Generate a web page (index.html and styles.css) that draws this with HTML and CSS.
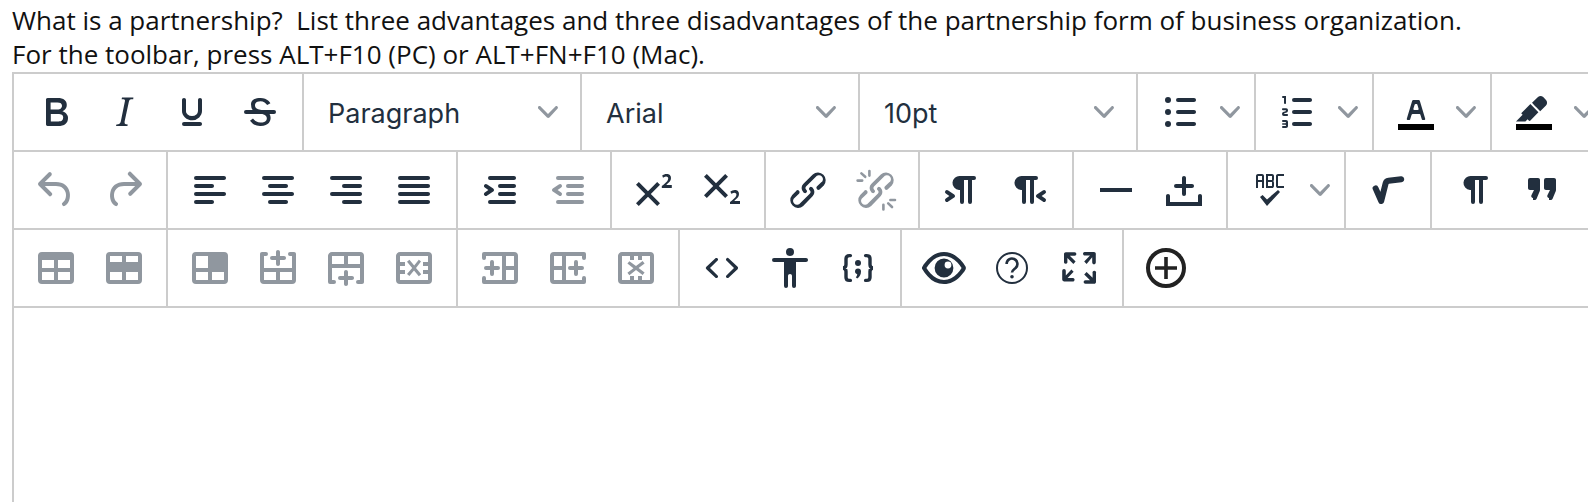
FILE: index.html
```html
<!DOCTYPE html>
<html lang="en">
<head>
<meta charset="utf-8">
<title>Essay question editor</title>
<link rel="stylesheet" href="styles.css">
</head>
<body>
<svg class="defs" width="0" height="0" aria-hidden="true">
<defs>
<symbol id="chev" viewBox="0 0 10 10"><path d="M8.7 2.2c.3-.3.8-.3 1 0 .4.4.4.9 0 1.2L5.7 7.8c-.3.3-.9.3-1.2 0L.2 3.4a.8.8 0 0 1 0-1.2c.3-.3.8-.3 1.1 0L5 6l3.7-3.8z"/></symbol>
<symbol id="bold" viewBox="0 0 24 24"><path fill-rule="evenodd" d="M7.8 19c-.3 0-.5 0-.6-.2l-.2-.5V5.7c0-.2 0-.4.2-.5l.6-.2h5c1.5 0 2.7.3 3.5 1 .7.6 1.1 1.4 1.1 2.5a3 3 0 0 1-.6 1.9c-.4.6-1 1-1.6 1.2.4.1.9.3 1.3.6s.8.7 1 1.2c.4.4.5 1 .5 1.6 0 1.3-.4 2.3-1.3 3-.8.7-2.1 1-3.8 1H7.8zm5-8.3c.6 0 1.2-.1 1.6-.5.4-.3.6-.7.6-1.3 0-1.1-.8-1.7-2.3-1.7H9.3v3.5h3.4zm.5 6c.7 0 1.3-.1 1.7-.4.4-.4.6-.9.6-1.5s-.2-1-.7-1.4c-.4-.3-1-.4-2-.4H9.4v3.8h4z"/></symbol>
<symbol id="italic" viewBox="0 0 24 24"><path d="M16.7 4.7l-.1.9h-.3c-.6 0-1 0-1.4.3-.3.3-.4.6-.5 1.1l-2.1 9.8v.6c0 .5.4.8 1.4.8h.2l-.2.8H8l.2-.8h.2c1.1 0 1.8-.5 2-1.5l2-9.8.1-.5c0-.6-.4-.8-1.4-.8h-.3l.2-.9h5.8z"/></symbol>
<symbol id="underline" viewBox="0 0 24 24"><path d="M16 5c.6 0 1 .4 1 1v5.5a4 4 0 0 1-.4 1.8l-1 1.4a5.3 5.3 0 0 1-5.5 1 5 5 0 0 1-1.6-1c-.5-.4-.8-.9-1.1-1.4a4 4 0 0 1-.4-1.8V6c0-.6.4-1 1-1s1 .4 1 1v5.5c0 .3 0 .6.2 1l.6.7a3.3 3.3 0 0 0 2.2.8 3.4 3.4 0 0 0 2.2-.8c.3-.2.4-.5.6-.8l.2-.9V6c0-.6.4-1 1-1zM8 17h8c.6 0 1 .4 1 1s-.4 1-1 1H8a1 1 0 0 1 0-2z"/></symbol>
<symbol id="strike" viewBox="0 0 24 24"><path d="M15.6 8.5c-.5-.7-1-1.1-1.3-1.3-.6-.4-1.3-.6-2-.6-2.7 0-2.8 1.7-2.8 2.1 0 1.6 1.8 2 3.2 2.3 4.4.9 4.6 2.8 4.6 3.9 0 1.4-.7 4.1-5 4.1A6.2 6.2 0 0 1 7 16.4l1.5-1.1c.4.6 1.6 2 3.7 2 1.6 0 2.5-.4 3-1.2.4-.8.3-2-.8-2.6-.7-.4-1.6-.7-2.9-1-1-.2-3.9-.8-3.9-3.6C7 6 9.3 5 12.3 5c1.7 0 3 .6 3.9 1.4.4.4.8.9 1 1.2l-1.6.9z"/><path d="M5 11h14a1 1 0 0 1 0 2H5a1 1 0 0 1 0-2z"/></symbol>
<symbol id="bull" viewBox="0 0 24 24"><path d="M11 5h8c.6 0 1 .4 1 1s-.4 1-1 1h-8a1 1 0 0 1 0-2zm0 6h8c.6 0 1 .4 1 1s-.4 1-1 1h-8a1 1 0 0 1 0-2zm0 6h8c.6 0 1 .4 1 1s-.4 1-1 1h-8a1 1 0 0 1 0-2z"/><circle cx="6" cy="6" r="1.5"/><circle cx="6" cy="12" r="1.5"/><circle cx="6" cy="18" r="1.5"/></symbol>
<symbol id="num" viewBox="0 0 24 24"><path d="M10 17h8c.6 0 1 .4 1 1s-.4 1-1 1h-8a1 1 0 0 1 0-2zm0-6h8c.6 0 1 .4 1 1s-.4 1-1 1h-8a1 1 0 0 1 0-2zm0-6h8c.6 0 1 .4 1 1s-.4 1-1 1h-8a1 1 0 1 1 0-2zM6 4v3.5c0 .3-.2.5-.5.5a.5.5 0 0 1-.5-.5V5h-.5a.5.5 0 0 1 0-1H6zm-1 8.8l.2.2h1.3c.3 0 .5.2.5.5s-.2.5-.5.5H4.9a1 1 0 0 1-.9-1V13c0-.4.3-.8.6-1l1.2-.4.2-.3a.2.2 0 0 0-.2-.2H4.5a.5.5 0 0 1-.5-.5c0-.3.2-.5.5-.5h1.6c.5 0 .9.4.9 1v.1c0 .4-.3.8-.6 1l-1.2.4-.2.3zM7 17v2c0 .6-.4 1-1 1H4.5a.5.5 0 0 1 0-1h1.2c.2 0 .3-.1.3-.3 0-.2-.1-.3-.3-.3H4.4a.4.4 0 1 1 0-.8h1.3c.2 0 .3-.1.3-.3 0-.2-.1-.3-.3-.3H4.5a.5.5 0 1 1 0-1H6c.6 0 1 .4 1 1v.5z"/></symbol>
<symbol id="forecolor" viewBox="0 0 24 24"><path class="swatch" d="M3 18h18v3H3z"/><path fill-rule="evenodd" d="M8.7 16h-.8a.5.5 0 0 1-.5-.6l2.7-9c.1-.3.3-.4.5-.4h2.8c.2 0 .4.1.5.4l2.7 9a.5.5 0 0 1-.5.6h-.8a.5.5 0 0 1-.4-.4l-.7-2.2c0-.3-.3-.4-.5-.4h-3.4c-.2 0-.4.1-.5.4l-.7 2.2c0 .3-.2.4-.4.4zm2.6-7.6l-.6 2a.5.5 0 0 0 .5.6h1.6a.5.5 0 0 0 .5-.6l-.6-2c0-.3-.3-.4-.5-.4h-.4c-.2 0-.4.1-.5.4z"/></symbol>
<symbol id="highlight" viewBox="0 0 24 24"><path class="swatch" d="M3 18h18v3H3z"/><path d="M7.7 16.7H3l3.3-3.3-.7-.8L10.2 8l4 4.1-4 4.2c-.2.2-.6.2-.8 0l-.6-.7-1.1 1.1zm5-7.5L11 7.4l3-2.9a2 2 0 0 1 2.6 0L18 6c.7.7.7 2 0 2.7l-2.9 2.9-1.8-1.8-.5-.6"/></symbol>
<symbol id="undo" viewBox="0 0 24 24"><path d="M6.4 8H12c3.7 0 6.2 2 6.8 5.1.6 2.7-.4 5.6-2.3 6.8a1 1 0 0 1-1-1.8c1.1-.7 1.8-2.7 1.4-4.6-.5-2.1-2.1-3.5-4.9-3.5H6.4l3.3 3.3a1 1 0 1 1-1.4 1.4l-5-5a1 1 0 0 1 0-1.4l5-5a1 1 0 0 1 1.4 1.4L6.4 8z"/></symbol>
<symbol id="redo" viewBox="0 0 24 24"><path d="M17.6 10H12c-2.8 0-4.4 1.4-4.9 3.5-.4 2 .3 3.9 1.4 4.6a1 1 0 1 1-1 1.8c-2-1.2-2.9-4.1-2.3-6.8.6-3 3-5.1 6.8-5.1h5.6l-3.3-3.3a1 1 0 1 1 1.4-1.4l5 5a1 1 0 0 1 0 1.4l-5 5a1 1 0 0 1-1.4-1.4l3.3-3.3z"/></symbol>
<symbol id="al" viewBox="0 0 24 24"><path d="M5 5h14c.6 0 1 .4 1 1s-.4 1-1 1H5a1 1 0 1 1 0-2zm0 4h8c.6 0 1 .4 1 1s-.4 1-1 1H5a1 1 0 1 1 0-2zm0 8h8c.6 0 1 .4 1 1s-.4 1-1 1H5a1 1 0 0 1 0-2zm0-4h14c.6 0 1 .4 1 1s-.4 1-1 1H5a1 1 0 0 1 0-2z"/></symbol>
<symbol id="ac" viewBox="0 0 24 24"><path d="M5 5h14c.6 0 1 .4 1 1s-.4 1-1 1H5a1 1 0 1 1 0-2zm3 4h8c.6 0 1 .4 1 1s-.4 1-1 1H8a1 1 0 1 1 0-2zm0 8h8c.6 0 1 .4 1 1s-.4 1-1 1H8a1 1 0 0 1 0-2zm-3-4h14c.6 0 1 .4 1 1s-.4 1-1 1H5a1 1 0 0 1 0-2z"/></symbol>
<symbol id="ar" viewBox="0 0 24 24"><path d="M5 5h14c.6 0 1 .4 1 1s-.4 1-1 1H5a1 1 0 1 1 0-2zm6 4h8c.6 0 1 .4 1 1s-.4 1-1 1h-8a1 1 0 0 1 0-2zm0 8h8c.6 0 1 .4 1 1s-.4 1-1 1h-8a1 1 0 0 1 0-2zm-6-4h14c.6 0 1 .4 1 1s-.4 1-1 1H5a1 1 0 0 1 0-2z"/></symbol>
<symbol id="aj" viewBox="0 0 24 24"><path d="M5 5h14c.6 0 1 .4 1 1s-.4 1-1 1H5a1 1 0 1 1 0-2zm0 4h14c.6 0 1 .4 1 1s-.4 1-1 1H5a1 1 0 1 1 0-2zm0 4h14c.6 0 1 .4 1 1s-.4 1-1 1H5a1 1 0 0 1 0-2zm0 4h14c.6 0 1 .4 1 1s-.4 1-1 1H5a1 1 0 0 1 0-2z"/></symbol>
<symbol id="indent" viewBox="0 0 24 24"><path d="M7 5h12c.6 0 1 .4 1 1s-.4 1-1 1H7a1 1 0 1 1 0-2zm5 4h7c.6 0 1 .4 1 1s-.4 1-1 1h-7a1 1 0 0 1 0-2zm0 4h7c.6 0 1 .4 1 1s-.4 1-1 1h-7a1 1 0 0 1 0-2zm-5 4h12a1 1 0 0 1 0 2H7a1 1 0 0 1 0-2zm-2.6-3.8L6.2 12l-1.8-1.2a1 1 0 0 1 1.2-1.6l3 2a1 1 0 0 1 0 1.6l-3 2a1 1 0 1 1-1.2-1.6z"/></symbol>
<symbol id="outdent" viewBox="0 0 24 24"><path d="M7 5h12c.6 0 1 .4 1 1s-.4 1-1 1H7a1 1 0 1 1 0-2zm5 4h7c.6 0 1 .4 1 1s-.4 1-1 1h-7a1 1 0 0 1 0-2zm0 4h7c.6 0 1 .4 1 1s-.4 1-1 1h-7a1 1 0 0 1 0-2zm-5 4h12a1 1 0 0 1 0 2H7a1 1 0 0 1 0-2zm1.6-3.8a1 1 0 0 1-1.2 1.6l-3-2a1 1 0 0 1 0-1.6l3-2a1 1 0 0 1 1.2 1.6L6.8 12l1.8 1.2z"/></symbol>
<symbol id="sup" viewBox="0 0 24 24"><path d="M15 9.4L10.4 14l4.6 4.6-1.4 1.4L9 15.4 4.4 20 3 18.6 7.6 14 3 9.4 4.4 8 9 12.6 13.6 8 15 9.4zm5.9 1.6h-5v-1l1-.8 1.7-1.6c.3-.5.5-.9.5-1.3 0-.3 0-.5-.2-.7-.2-.2-.5-.3-.9-.3l-.8.2-.7.4-.4-1.2c.2-.2.5-.4 1-.5.3-.2.8-.2 1.2-.2.7 0 1.2.2 1.6.5.4.4.6.9.6 1.5s-.2 1.1-.5 1.6a8 8 0 0 1-1.3 1.3l-.6.6h2.8V11z"/></symbol>
<symbol id="sub" viewBox="0 0 24 24"><path d="M10.4 10l4.6 4.6-1.4 1.4L9 11.4 4.4 16 3 14.6 7.6 10 3 5.4 4.4 4 9 8.6 13.6 4 15 5.4 10.4 10zM21 19h-5v-1l1-.8 1.7-1.6c.3-.4.5-.8.5-1.2 0-.3 0-.6-.2-.7-.2-.2-.5-.3-.9-.3a2 2 0 0 0-.8.2l-.7.3-.4-1.1 1-.6 1.2-.2c.6 0 1.2.2 1.5.5.4.4.6.9.6 1.5s-.2 1.1-.5 1.6a8 8 0 0 1-1.3 1.3l-.6.6H21V19z"/></symbol>
<symbol id="link" viewBox="0 0 24 24"><path d="M6.2 12.3a1 1 0 0 1 1.4 1.4l-2.1 2a2 2 0 1 0 2.700 2.800l4.800-4.800a1 1 0 0 0 0-1.400 1 1 0 1 1 1.400-1.300 2.900 2.900 0 0 1 0 4L9.600 20a3.900 3.900 0 0 1-5.500-5.500l2-2zm11.600-.6a1 1 0 0 1-1.400-1.400l2.100-2a2 2 0 1 0-2.700-2.800L11 10.300a1 1 0 0 0 0 1.400 1 1 0 1 1-1.400 1.300 2.900 2.900 0 0 1 0-4L14.400 4.200a3.900 3.900 0 0 1 5.500 5.500l-2.100 2z"/></symbol>
<symbol id="unlink" viewBox="0 0 24 24"><path d="M6.2 12.3a1 1 0 0 1 1.4 1.4l-2.1 2a2 2 0 1 0 2.700 2.800l4.800-4.800a1 1 0 0 0 0-1.400 1 1 0 1 1 1.400-1.300 2.900 2.900 0 0 1 0 4L9.600 20a3.900 3.900 0 0 1-5.500-5.500l2-2zm11.600-.6a1 1 0 0 1-1.400-1.400l2.100-2a2 2 0 1 0-2.700-2.800L11 10.300a1 1 0 0 0 0 1.400 1 1 0 1 1-1.400 1.300 2.900 2.900 0 0 1 0-4L14.400 4.200a3.900 3.900 0 0 1 5.500 5.500l-2.100 2z"/><path class="tick" d="M4.700 3.700l1.900 1.700M8.700 2.500v2.300M2.800 7.300h2.300M20 20.500l-1.900-1.800M15.700 21.700v-2.300M21.500 17h-2.300"/></symbol>
<symbol id="ltr" viewBox="0 0 24 24"><path d="M11 5h7a1 1 0 0 1 0 2h-1v11a1 1 0 0 1-2 0V7h-2v11a1 1 0 0 1-2 0v-6h-.5a3.5 3.5 0 0 1 .5-7z"/><path d="M3.900 16.200L5.700 15l-1.800-1.200a1 1 0 0 1 1.200-1.600l3 2a1 1 0 0 1 0 1.600l-3 2a1 1 0 1 1-1.200-1.600z"/></symbol>
<symbol id="rtl" viewBox="0 0 24 24"><path d="M8 5h7a1 1 0 0 1 0 2h-1v11a1 1 0 0 1-2 0V7h-2v11a1 1 0 0 1-2 0v-6h-.5A3.5 3.5 0 0 1 8 5z"/><path d="M19.600 16.200L17.800 15l1.800-1.200a1 1 0 0 0-1.200-1.600l-3 2a1 1 0 0 0 0 1.600l3 2a1 1 0 1 0 1.200-1.600z"/></symbol>
<symbol id="hr" viewBox="0 0 24 24"><path d="M4 11h16v2H4z"/></symbol>
<symbol id="nbsp" viewBox="0 0 24 24"><path d="M11 11H8a1 1 0 1 1 0-2h3V6c0-.6.4-1 1-1s1 .4 1 1v3h3c.6 0 1 .4 1 1s-.4 1-1 1h-3v3c0 .6-.4 1-1 1a1 1 0 0 1-1-1v-3zM21 15v5H3v-5c0-.6.4-1 1-1s1 .4 1 1v3h14v-3c0-.6.4-1 1-1s1 .4 1 1z"/></symbol>
<symbol id="spell" viewBox="0 0 24 24"><path d="M6 8v3H5V5c0-.3.1-.5.3-.7.2-.2.4-.3.7-.3h2c.3 0 .5.1.7.3.2.2.3.4.3.7v6H8V8H6zm0-3v2h2V5H6zm13 0h-3v5h3v1h-3a1 1 0 0 1-.7-.3 1 1 0 0 1-.3-.7V5c0-.3.1-.5.3-.7.2-.2.4-.3.7-.3h3v1zm-5 1.5l-.1.7c-.1.2-.3.3-.6.3.3 0 .5.1.6.3l.1.7V10c0 .3-.1.5-.3.7a1 1 0 0 1-.7.3h-3V4h3c.3 0 .5.1.7.3.2.2.3.4.3.7v1.5zM13 10V8h-2v2h2zm0-3V5h-2v2h2zm3 5l1 1-6.5 7L7 15.5l1.3-1 2.2 2.2L16 12z"/></symbol>
<symbol id="sqrt" viewBox="0 0 24 24"><path class="root" d="M5.800 11.200L8.600 17.500 10.800 8.700c.2-.8.7-1.200 1.500-1.300l6.300-.8"/></symbol>
<symbol id="para" viewBox="0 0 24 24"><path d="M10 5h8a1 1 0 0 1 0 2h-1.500v11a1 1 0 0 1-2 0V7h-2v11a1 1 0 0 1-2 0v-6h-.5a3.500 3.500 0 0 1 .5-7z"/></symbol>
<symbol id="quote" viewBox="0 0 24 24"><path d="M7.500 17h.9c.4 0 .7-.2.9-.6L10.700 13c.2-.3.3-.7.3-1.100V7c0-.6-.4-1-1-1H6a1 1 0 0 0-1 1v4c0 .6.4 1 1 1h2l-1.300 2.600a1 1 0 0 0 .8 1.400zm8 0h.9c.4 0 .7-.2.9-.6L18.700 13c.2-.3.3-.7.3-1.100V7c0-.6-.4-1-1-1h-4a1 1 0 0 0-1 1v4c0 .6.4 1 1 1h2l-1.300 2.600a1 1 0 0 0 .8 1.400z"/></symbol>
<symbol id="tb1" viewBox="0 0 24 24"><path fill-rule="evenodd" d="M5 4h14a2 2 0 0 1 2 2v12a2 2 0 0 1-2 2H5a2 2 0 0 1-2-2V6a2 2 0 0 1 2-2zM5 8v4h6V8H5zm8 0v4h6V8h-6zm-8 6v4h6v-4H5zm8 0v4h6v-4h-6z"/></symbol>
<symbol id="tb2" viewBox="0 0 24 24"><path fill-rule="evenodd" d="M5 4h14a2 2 0 0 1 2 2v12a2 2 0 0 1-2 2H5a2 2 0 0 1-2-2V6a2 2 0 0 1 2-2zM5 6v3h6V6H5zm8 0v3h6V6h-6zm-8 8v4h6v-4H5zm8 0v4h6v-4h-6z"/></symbol>
<symbol id="tb3" viewBox="0 0 24 24"><path fill-rule="evenodd" d="M5 4h14a2 2 0 0 1 2 2v12a2 2 0 0 1-2 2H5a2 2 0 0 1-2-2V6a2 2 0 0 1 2-2zM5 6v6h6V6H5zm0 8v4h6v-4H5zm8 0v4h6v-4h-6z"/></symbol>
<symbol id="rowb" viewBox="0 0 24 24"><path fill-rule="evenodd" d="M6 4a1 1 0 1 1 0 2H5v6h14V6h-1a1 1 0 0 1 0-2h2c.6 0 1 .4 1 1v13a2 2 0 0 1-2 2H5a2 2 0 0 1-2-2V5c0-.6.4-1 1-1h2zm5 10H5v4h6v-4zm8 0h-6v4h6v-4zM12 3c.5 0 1 .4 1 1v2h2c.6 0 1 .4 1 1s-.4 1-1 1h-2v2c0 .6-.4 1-1 1a1 1 0 0 1-1-1V8H9a1 1 0 0 1 0-2h2V4c0-.6.4-1 1-1z"/></symbol>
<symbol id="rowa" viewBox="0 0 24 24"><path fill-rule="evenodd" d="M12 13c.5 0 1 .4 1 1v2h2c.6 0 1 .4 1 1s-.4 1-1 1h-2v2c0 .6-.4 1-1 1s-1-.4-1-1v-2H9a1 1 0 0 1 0-2h2v-2c0-.6.4-1 1-1zm6 7a1 1 0 0 1 0-2h1v-6H5v6h1a1 1 0 0 1 0 2H4a1 1 0 0 1-1-1V6c0-1.100.9-2 2-2h14a2 2 0 0 1 2 2v13c0 .5-.4 1-1 1h-2zM11 6H5v4h6V6zm8 0h-6v4h6V6z"/></symbol>
<symbol id="rowd" viewBox="0 0 24 24"><path fill-rule="evenodd" d="M19 4a2 2 0 0 1 2 2v12a2 2 0 0 1-2 2H5a2 2 0 0 1-2-2V6c0-1.100.9-2 2-2h14zm0 2H5v3h2.500v2H5v2h2.500v2H5v3h14v-3h-2.500v-2H19v-2h-2.500V9H19V6zm-4.700 1.800l1.200 1L13 12l2.600 3.100-1.200 1-2.400-2.800L9.700 16l-1.200-1 2.600-3-2.600-3.100 1.200-1 2.400 2.800 2.300-2.800z"/></symbol>
<symbol id="colb" viewBox="0 0 24 24"><path fill-rule="evenodd" d="M13 4h6a2 2 0 0 1 2 2v12a2 2 0 0 1-2 2h-6zm2 2v5h4V6h-4zm0 7v5h4v-5h-4zM4 4h9v2H5v1a1 1 0 0 1-2 0V5a1 1 0 0 1 1-1zM4 20h9v-2H5v-1a1 1 0 0 0-2 0v2a1 1 0 0 0 1 1zM8 8a1 1 0 0 1 1 1v2h2a1 1 0 0 1 0 2H9v2a1 1 0 0 1-2 0v-2H5a1 1 0 0 1 0-2h2V9a1 1 0 0 1 1-1z"/></symbol>
<symbol id="cola" viewBox="0 0 24 24"><path fill-rule="evenodd" d="M11 4H5a2 2 0 0 0-2 2v12a2 2 0 0 0 2 2h6zM9 6v5H5V6h4zm0 7v5H5v-5h4zM20 4h-9v2h8v1a1 1 0 0 0 2 0V5a1 1 0 0 0-1-1zM20 20h-9v-2h8v-1a1 1 0 0 1 2 0v2a1 1 0 0 1-1 1zM16 8a1 1 0 0 0-1 1v2h-2a1 1 0 0 0 0 2h2v2a1 1 0 0 0 2 0v-2h2a1 1 0 0 0 0-2h-2V9a1 1 0 0 0-1-1z"/></symbol>
<symbol id="cold" viewBox="0 0 24 24"><path fill-rule="evenodd" d="M19 4a2 2 0 0 1 2 2v12a2 2 0 0 1-2 2H5a2 2 0 0 1-2-2V6c0-1.100.9-2 2-2h14zm-4 4h-2V6h-2v2H9V6H5v12h4v-2h2v2h2v-2h2v2h4V6h-4v2zm.3.500l1 1.200-3 2.300 3 2.300-1 1.200L12 13l-3.300 2.600-1-1.200 3-2.300-3-2.300 1-1.200L12 11l3.300-2.500z"/></symbol>
<symbol id="code" viewBox="0 0 24 24"><path d="M9.800 15.700c.3.3.3.8 0 1-.3.4-.9.4-1.200 0l-4.400-4.100a.8.8 0 0 1 0-1.200l4.400-4.200c.3-.3.9-.3 1.200 0 .3.3.3.8 0 1.100L6 12l3.800 3.700zm4.400 0c-.3.3-.3.8 0 1 .3.4.9.4 1.200 0l4.400-4.100c.3-.4.3-.9 0-1.200l-4.400-4.200a.8.8 0 0 0-1.200 0c-.3.3-.3.8 0 1.100L18 12l-3.800 3.700z"/></symbol>
<symbol id="a11y" viewBox="0 0 24 24"><path d="M12 2a2 2 0 0 1 2 2 2 2 0 0 1-2 2 2 2 0 0 1-2-2 2 2 0 0 1 2-2zm8 7h-5v12c0 .6-.4 1-1 1a1 1 0 0 1-1-1v-5c0-.6-.4-1-1-1s-1 .4-1 1v5c0 .6-.4 1-1 1a1 1 0 0 1-1-1V9H4a1 1 0 1 1 0-2h16c.6 0 1 .4 1 1s-.4 1-1 1z"/></symbol>
<symbol id="sample" viewBox="0 0 24 24"><path class="brace" d="M8.200 5.800H7.600c-1 0-1.600.6-1.600 1.600v2.800c0 1-.5 1.600-1.300 1.800.8.200 1.300.8 1.300 1.800v2.800c0 1 .6 1.600 1.600 1.600h.6M15.800 5.800h.6c1 0 1.600.6 1.600 1.600v2.800c0 1 .5 1.600 1.300 1.800-.8.200-1.300.8-1.300 1.800v2.800c0 1-.6 1.600-1.600 1.600h-.6"/><circle cx="12" cy="9.500" r="1.500"/><path d="M10.500 13.800a1.500 1.500 0 0 1 3 0c0 1.500-.7 2.700-1.900 3.500l-.7-.7c.5-.5.700-1 .7-1.500-.6-.1-1.100-.7-1.100-1.300z"/></symbol>
<symbol id="eye" viewBox="0 0 24 24"><path fill-rule="evenodd" d="M12 4c3 0 5.800 1.400 8.100 3.800a18.200 18.200 0 0 1 2.800 3.700v1l-.7 1.200-2.100 2.500c-2.300 2.400-5 3.800-8.100 3.800a11 11 0 0 1-8.100-3.800 18.200 18.200 0 0 1-2.800-3.700 1 1 0 0 1 0-1l.7-1.200L3.900 7.800C6.200 5.400 8.900 4 12 4zm0 2a9.300 9.300 0 0 0-6.700 3.200A16.200 16.200 0 0 0 3.200 12c.6 1 1.300 1.900 2.100 2.800 2 2 4.200 3.200 6.700 3.200s4.700-1.200 6.700-3.200a16.200 16.200 0 0 0 2.100-2.800 15.700 15.700 0 0 0-2.100-2.800C16.700 7.200 14.500 6 12 6z"/><path fill-rule="evenodd" d="M12 7.300a4.700 4.700 0 1 1 0 9.400 4.700 4.700 0 0 1 0-9.400zm2 1.500a1.700 1.700 0 1 0 0 3.400 1.700 1.700 0 0 0 0-3.400z"/></symbol>
<symbol id="help" viewBox="0 0 24 24"><circle class="ring" cx="12" cy="12" r="7.500"/><path class="ask" d="M9.300 10a2.700 2.700 0 1 1 4.500 2c-1 .8-1.800 1.200-1.800 2.300"/><circle cx="12" cy="16.400" r=".9"/></symbol>
<symbol id="full" viewBox="0 0 24 24"><path d="M15.300 10l-1.200-1.300 2.900-3h-2.300a.9.900 0 1 1 0-1.700H19c.5 0 .9.4.9.9v4.400a.9.9 0 1 1-1.800 0V6.600l-2.800 3.400zm0 4l3 2.900v-2.300a.9.900 0 1 1 1.700 0V19c0 .5-.4.900-.9.900h-4.400a.9.900 0 1 1 0-1.800h2.300l-2.900-2.800 1.200-1.300zM8.700 10L5.700 7v2.300a.9.900 0 0 1-1.700 0V5c0-.5.4-.9.900-.9h4.400a.9.900 0 0 1 0 1.800H6.900l2.900 2.900L8.700 10zm0 4l-2.900 3h2.300a.9.900 0 1 1 0 1.700H4a.9.9 0 0 1-.9-.9v-4.400a.9.900 0 0 1 1.800 0v2.300l2.800-2.900 1.200 1.200z"/></symbol>
<symbol id="plus" viewBox="0 0 24 24"><circle class="plus-ring" cx="12" cy="12" r="9"/><path class="plus-mark" d="M12 6.500v11M6.500 12h11"/></symbol>
</defs>
</svg>

<p class="prompt">What is a partnership?&nbsp; List three advantages and three disadvantages of the partnership form of business organization.<br>For the toolbar, press ALT+F10 (PC) or ALT+FN+F10 (Mac).</p>

<div class="editor">
  <div class="row">
    <div class="group">
      <span class="btn"><svg class="ico"><use href="#bold"/></svg></span>
      <span class="btn"><svg class="ico"><use href="#italic"/></svg></span>
      <span class="btn"><svg class="ico"><use href="#underline"/></svg></span>
      <span class="btn"><svg class="ico"><use href="#strike"/></svg></span>
    </div>
    <div class="group select"><span class="label">Paragraph</span><svg class="chev"><use href="#chev"/></svg></div>
    <div class="group select"><span class="label">Arial</span><svg class="chev"><use href="#chev"/></svg></div>
    <div class="group select"><span class="label">10pt</span><svg class="chev"><use href="#chev"/></svg></div>
    <div class="group split">
      <span class="btn"><svg class="ico"><use href="#bull"/></svg></span><span class="more"><svg class="chev"><use href="#chev"/></svg></span>
    </div>
    <div class="group split">
      <span class="btn"><svg class="ico"><use href="#num"/></svg></span><span class="more"><svg class="chev"><use href="#chev"/></svg></span>
    </div>
    <div class="group split">
      <span class="btn"><svg class="ico"><use href="#forecolor"/></svg></span><span class="more"><svg class="chev"><use href="#chev"/></svg></span>
    </div>
    <div class="group split">
      <span class="btn"><svg class="ico"><use href="#highlight"/></svg></span><span class="more"><svg class="chev"><use href="#chev"/></svg></span>
    </div>
  </div>

  <div class="row">
    <div class="group">
      <span class="btn off"><svg class="ico"><use href="#undo"/></svg></span>
      <span class="btn off"><svg class="ico"><use href="#redo"/></svg></span>
    </div>
    <div class="group">
      <span class="btn"><svg class="ico"><use href="#al"/></svg></span>
      <span class="btn"><svg class="ico"><use href="#ac"/></svg></span>
      <span class="btn"><svg class="ico"><use href="#ar"/></svg></span>
      <span class="btn"><svg class="ico"><use href="#aj"/></svg></span>
    </div>
    <div class="group">
      <span class="btn"><svg class="ico"><use href="#indent"/></svg></span>
      <span class="btn off"><svg class="ico"><use href="#outdent"/></svg></span>
    </div>
    <div class="group">
      <span class="btn"><svg class="ico"><use href="#sup"/></svg></span>
      <span class="btn"><svg class="ico"><use href="#sub"/></svg></span>
    </div>
    <div class="group">
      <span class="btn"><svg class="ico"><use href="#link"/></svg></span>
      <span class="btn off"><svg class="ico"><use href="#unlink"/></svg></span>
    </div>
    <div class="group">
      <span class="btn"><svg class="ico"><use href="#ltr"/></svg></span>
      <span class="btn"><svg class="ico"><use href="#rtl"/></svg></span>
    </div>
    <div class="group">
      <span class="btn"><svg class="ico"><use href="#hr"/></svg></span>
      <span class="btn"><svg class="ico"><use href="#nbsp"/></svg></span>
    </div>
    <div class="group split">
      <span class="btn"><svg class="ico"><use href="#spell"/></svg></span><span class="more"><svg class="chev"><use href="#chev"/></svg></span>
    </div>
    <div class="group">
      <span class="btn"><svg class="ico"><use href="#sqrt"/></svg></span>
    </div>
    <div class="group">
      <span class="btn"><svg class="ico"><use href="#para"/></svg></span>
      <span class="btn"><svg class="ico"><use href="#quote"/></svg></span>
    </div>
  </div>

  <div class="row">
    <div class="group">
      <span class="btn off"><svg class="ico"><use href="#tb1"/></svg></span>
      <span class="btn off"><svg class="ico"><use href="#tb2"/></svg></span>
    </div>
    <div class="group">
      <span class="btn off"><svg class="ico"><use href="#tb3"/></svg></span>
      <span class="btn off"><svg class="ico"><use href="#rowb"/></svg></span>
      <span class="btn off"><svg class="ico"><use href="#rowa"/></svg></span>
      <span class="btn off"><svg class="ico"><use href="#rowd"/></svg></span>
    </div>
    <div class="group">
      <span class="btn off"><svg class="ico"><use href="#colb"/></svg></span>
      <span class="btn off"><svg class="ico"><use href="#cola"/></svg></span>
      <span class="btn off"><svg class="ico"><use href="#cold"/></svg></span>
    </div>
    <div class="group">
      <span class="btn"><svg class="ico"><use href="#code"/></svg></span>
      <span class="btn"><svg class="ico"><use href="#a11y"/></svg></span>
      <span class="btn"><svg class="ico"><use href="#sample"/></svg></span>
    </div>
    <div class="group">
      <span class="btn"><svg class="ico"><use href="#eye"/></svg></span>
      <span class="btn"><svg class="ico"><use href="#help"/></svg></span>
      <span class="btn"><svg class="ico"><use href="#full"/></svg></span>
    </div>
    <div class="group">
      <span class="btn"><svg class="ico"><use href="#plus"/></svg></span>
    </div>
  </div>
  <div class="content"></div>
</div>
</body>
</html>
```

FILE: styles.css
```css
html, body {
  margin: 0;
  height: 502px;
  overflow: hidden;
  background: #fff;
}
body {
  padding-left: 12px;
  box-sizing: border-box;
}
.defs {
  position: absolute;
}
.prompt {
  margin: 0;
  padding-top: 3px;
  height: 72px;
  box-sizing: border-box;
  font: 26px/34px "Open Sans", sans-serif;
  color: #111;
  white-space: nowrap;
}
.editor {
  width: 1576px;
  height: 430px;
  box-sizing: border-box;
  border-left: 2px solid #ccc;
  border-top: 2px solid #ccc;
  overflow: hidden;
  color: #222f3e;
}
.row {
  display: flex;
  height: 76px;
  border-bottom: 2px solid #ccc;
}
.group {
  display: flex;
  flex: none;
  align-items: center;
  padding: 0 8px;
  border-right: 2px solid #ccc;
}
.row .group:last-child {
  border-right: 0;
}
.btn {
  display: flex;
  flex: none;
  align-items: center;
  justify-content: center;
  width: 68px;
  height: 68px;
}
.more {
  display: flex;
  flex: none;
  align-items: center;
  justify-content: center;
  width: 32px;
  height: 68px;
}
.ico {
  width: 48px;
  height: 48px;
  fill: currentColor;
}
.off {
  color: #90979f;
}
.chev {
  width: 20px;
  height: 20px;
  fill: #90979f;
}
.select {
  justify-content: space-between;
  padding: 0 22px 0 24px;
  width: 230px;
  font: 27px/40px Inter, sans-serif;
}
.label {
  padding-top: 4px;
}
.swatch {
  fill: #000;
}
.tick {
  fill: none;
  stroke: currentColor;
  stroke-width: 1.300;
  stroke-linecap: round;
}
.root {
  fill: none;
  stroke: currentColor;
  stroke-width: 3;
  stroke-linecap: round;
  stroke-linejoin: round;
}
.brace {
  fill: none;
  stroke: currentColor;
  stroke-width: 1.700;
  stroke-linecap: round;
}
.ring {
  fill: none;
  stroke: currentColor;
  stroke-width: 1;
}
.ask {
  fill: none;
  stroke: currentColor;
  stroke-width: 1.300;
}
.plus-ring {
  fill: none;
  stroke: #222;
  stroke-width: 2;
}
.plus-mark {
  fill: none;
  stroke: #222;
  stroke-width: 1.800;
}
```
